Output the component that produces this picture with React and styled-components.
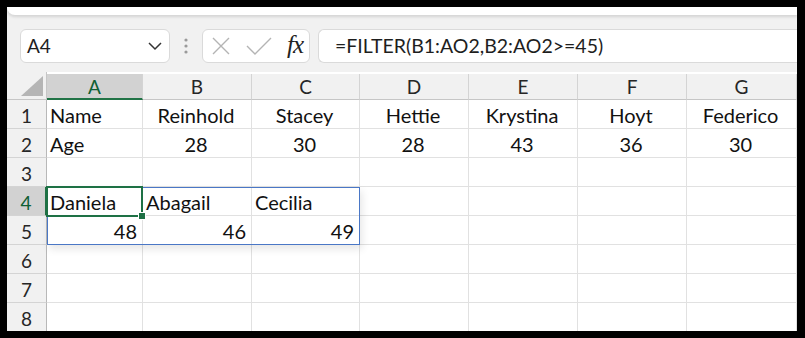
import React from 'react';
import styled, { createGlobalStyle } from 'styled-components';

const GlobalStyle = createGlobalStyle`
  html, body {
    margin: 0;
    padding: 0;
    background: #000;
  }
  * { box-sizing: border-box; }
`;

const FONT = `'Lato', 'Liberation Sans', sans-serif`;

const Frame = styled.div`
  width: 805px;
  height: 338px;
  background: #000;
  padding: 7px 8px 7px 7px;
`;

const Window = styled.div`
  width: 100%;
  height: 100%;
  background: #f1f1f1;
  display: flex;
  flex-direction: column;
  overflow: hidden;
  font-family: ${FONT};
`;

const RibbonEdge = styled.div`
  height: 8px;
  flex-shrink: 0;
  background: #fff;
  border-bottom-left-radius: 10px;
  box-shadow: 0 2px 3px rgba(0, 0, 0, 0.12);
`;

const FormulaBar = styled.div`
  height: 57px;
  flex-shrink: 0;
  display: flex;
  align-items: center;
  padding: 4px 0 0 13px;
`;

const FieldBox = styled.div`
  height: 34px;
  background: #fff;
  border: 1px solid #dadada;
  border-radius: 6px;
  display: flex;
  align-items: center;
`;

const NameBox = styled(FieldBox)`
  width: 150px;
  padding: 0 6px 0 6px;
  justify-content: space-between;
  font-size: 19px;
  color: #1e1e1e;
`;

const Grip = styled.div`
  width: 32px;
  display: flex;
  justify-content: center;
`;

const FxBox = styled(FieldBox)`
  width: 108px;
  padding: 0 6px 0 8px;
  justify-content: space-between;
`;

const FxLabel = styled.span`
  font-family: 'Liberation Serif', 'DejaVu Serif', serif;
  font-style: italic;
  font-size: 25px;
  color: #222;
  line-height: 1;
  margin-top: -3px;
  letter-spacing: -1px;
`;

const FormulaInput = styled(FieldBox)`
  flex: 1;
  margin-left: 8px;
  border-right: none;
  border-top-right-radius: 0;
  border-bottom-right-radius: 0;
  padding-left: 16px;
  font-size: 19.5px;
  color: #1e1e1e;
`;

const Sheet = styled.div`
  display: grid;
  grid-template-columns: 40px 96px 109px 108px 109px 109px 109px 110px;
  grid-template-rows: 28px repeat(8, 29px);
  background: #fff;
  position: relative;
`;

const Corner = styled.div`
  grid-column: 1;
  grid-row: 1;
  background: #f1f1f1;
  border-right: 1px solid #c6c6c6;
  border-bottom: 1px solid #c6c6c6;
  display: flex;
  align-items: flex-end;
  justify-content: flex-end;
  padding: 0 3px 3px 0;
`;

const ColHeader = styled.div`
  grid-column: ${p => p.$col};
  grid-row: 1;
  background: ${p => (p.$active ? '#d2d2d2' : '#f1f1f1')};
  color: ${p => (p.$active ? '#0f6034' : '#262626')};
  border-right: 1px solid #d4d4d4;
  border-bottom: ${p => (p.$active ? '2px solid #217346' : '1px solid #c6c6c6')};
  font-size: 19px;
  display: flex;
  align-items: center;
  justify-content: center;
  padding-top: ${p => (p.$active ? '1px' : '0')};
  margin-top: 2px;
`;

const RowHeader = styled.div`
  grid-column: 1;
  grid-row: ${p => p.$row};
  background: ${p => (p.$active ? '#d2d2d2' : '#f1f1f1')};
  color: ${p => (p.$active ? '#0f6034' : '#262626')};
  border-right: ${p => (p.$active ? '2px solid #217346' : '1px solid #b8b8b8')};
  border-bottom: 1px solid #d4d4d4;
  font-size: 19px;
  display: flex;
  align-items: center;
  justify-content: center;
  padding-top: 2px;
`;

const Cell = styled.div`
  grid-column: ${p => p.$col};
  grid-row: ${p => p.$row};
  border-right: 1px solid #e1e1e1;
  border-bottom: 1px solid #e1e1e1;
  font-size: 20px;
  color: #111;
  white-space: nowrap;
  display: flex;
  align-items: flex-end;
  padding: 0 5px 1px 3px;
  justify-content: ${p =>
    p.$align === 'center' ? 'center' : p.$align === 'right' ? 'flex-end' : 'flex-start'};
`;

const SpillRange = styled.div`
  grid-column: 2 / 5;
  grid-row: 5 / 7;
  border: 1px solid #4a77c6;
  box-shadow: 2px 4px 8px rgba(0, 0, 0, 0.1);
  pointer-events: none;
  z-index: 1;
`;

const ActiveCell = styled.div`
  grid-column: 2 / 3;
  grid-row: 5 / 6;
  margin: -1px 0 -1px -1px;
  border: 2px solid #1e7145;
  pointer-events: none;
  position: relative;
  z-index: 2;
`;

const FillHandle = styled.div`
  position: absolute;
  right: -4px;
  bottom: -4px;
  width: 6px;
  height: 6px;
  background: #1e7145;
  border: 1px solid #fff;
  box-sizing: content-box;
  margin: -1px;
`;

const cols = ['A', 'B', 'C', 'D', 'E', 'F', 'G'];

const cells = [
  { r: 1, c: 1, v: 'Name' },
  { r: 1, c: 2, v: 'Reinhold', a: 'center' },
  { r: 1, c: 3, v: 'Stacey', a: 'center' },
  { r: 1, c: 4, v: 'Hettie', a: 'center' },
  { r: 1, c: 5, v: 'Krystina', a: 'center' },
  { r: 1, c: 6, v: 'Hoyt', a: 'center' },
  { r: 1, c: 7, v: 'Federico', a: 'center' },
  { r: 2, c: 1, v: 'Age' },
  { r: 2, c: 2, v: '28', a: 'center' },
  { r: 2, c: 3, v: '30', a: 'center' },
  { r: 2, c: 4, v: '28', a: 'center' },
  { r: 2, c: 5, v: '43', a: 'center' },
  { r: 2, c: 6, v: '36', a: 'center' },
  { r: 2, c: 7, v: '30', a: 'center' },
  { r: 4, c: 1, v: 'Daniela' },
  { r: 4, c: 2, v: 'Abagail' },
  { r: 4, c: 3, v: 'Cecilia' },
  { r: 5, c: 1, v: '48', a: 'right' },
  { r: 5, c: 2, v: '46', a: 'right' },
  { r: 5, c: 3, v: '49', a: 'right' },
];

const Chevron = () => (
  <svg width="16" height="10" viewBox="0 0 16 10">
    <path d="M2 2 L8 8 L14 2" fill="none" stroke="#333" strokeWidth="1.5" />
  </svg>
);

const GripDots = () => (
  <svg width="6" height="18" viewBox="0 0 6 18">
    <circle cx="3" cy="3" r="1.6" fill="#9a9a9a" />
    <circle cx="3" cy="9" r="1.6" fill="#9a9a9a" />
    <circle cx="3" cy="15" r="1.6" fill="#9a9a9a" />
  </svg>
);

const CancelIcon = () => (
  <svg width="20" height="20" viewBox="0 0 20 20">
    <path d="M2 2 L18 18 M18 2 L2 18" stroke="#b4b4b4" strokeWidth="1.4" fill="none" />
  </svg>
);

const EnterIcon = () => (
  <svg width="26" height="20" viewBox="0 0 26 20">
    <path d="M1 10 L9 18 L25 2" stroke="#b4b4b4" strokeWidth="1.4" fill="none" />
  </svg>
);

const SelectAll = () => (
  <svg width="22" height="20" viewBox="0 0 22 20">
    <polygon points="22,0 22,20 0,20" fill="#b5b5b5" />
  </svg>
);

const App = () => {
  const cellMap = {};
  cells.forEach(c => {
    cellMap[`${c.r}-${c.c}`] = c;
  });

  const grid = [];
  for (let r = 1; r <= 8; r++) {
    for (let c = 1; c <= 7; c++) {
      const item = cellMap[`${r}-${c}`];
      grid.push(
        <Cell key={`${r}-${c}`} $row={r + 1} $col={c + 1} $align={item && item.a}>
          {item ? item.v : ''}
        </Cell>
      );
    }
  }

  return (
    <Frame>
      <GlobalStyle />
      <Window>
        <RibbonEdge />
        <FormulaBar>
          <NameBox>
            <span>A4</span>
            <Chevron />
          </NameBox>
          <Grip>
            <GripDots />
          </Grip>
          <FxBox>
            <CancelIcon />
            <EnterIcon />
            <FxLabel>fx</FxLabel>
          </FxBox>
          <FormulaInput>=FILTER(B1:AO2,B2:AO2&gt;=45)</FormulaInput>
        </FormulaBar>
        <Sheet>
          <Corner>
            <SelectAll />
          </Corner>
          {cols.map((c, i) => (
            <ColHeader key={c} $col={i + 2} $active={c === 'A'}>
              {c}
            </ColHeader>
          ))}
          {[1, 2, 3, 4, 5, 6, 7, 8].map(r => (
            <RowHeader key={r} $row={r + 1} $active={r === 4}>
              {r}
            </RowHeader>
          ))}
          {grid}
          <SpillRange />
          <ActiveCell>
            <FillHandle />
          </ActiveCell>
        </Sheet>
      </Window>
    </Frame>
  );
};

export default App;
